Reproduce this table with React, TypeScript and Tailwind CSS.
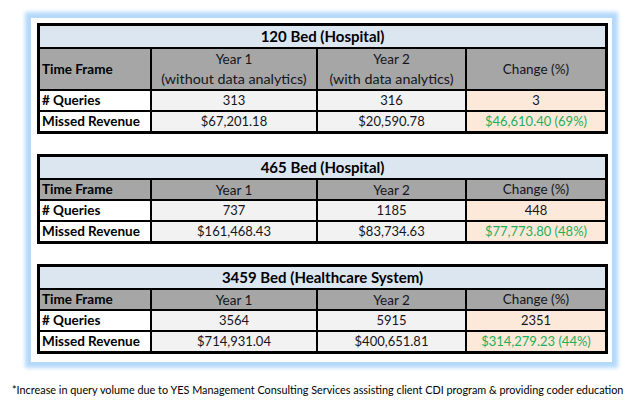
import React from "react";

type T = {
  title: string;
  y1: React.ReactNode;
  y2: React.ReactNode;
  tall: boolean;
  q: [string, string, string];
  r: [string, string, string];
};

const tables: T[] = [
  {
    title: "120 Bed (Hospital)",
    y1: (
      <>
        Year 1<br />
        <span className="text-[14.3px]">(without data analytics)</span>
      </>
    ),
    y2: (
      <>
        Year 2<br />
        <span className="text-[14.3px]">(with data analytics)</span>
      </>
    ),
    tall: true,
    q: ["313", "316", "3"],
    r: ["$67,201.18", "$20,590.78", "$46,610.40 (69%)"],
  },
  {
    title: "465 Bed (Hospital)",
    y1: "Year 1",
    y2: "Year 2",
    tall: false,
    q: ["737", "1185", "448"],
    r: ["$161,468.43", "$83,734.63", "$77,773.80 (48%)"],
  },
  {
    title: "3459 Bed (Healthcare System)",
    y1: "Year 1",
    y2: "Year 2",
    tall: false,
    q: ["3564", "5915", "2351"],
    r: ["$714,931.04", "$400,651.81", "$314,279.23 (44%)"],
  },
];

function Table({ t }: { t: T }) {
  const hh = t.tall ? "h-[40px]" : "h-[19px]";
  return (
    <div className="w-[571px] border-[3px] border-black bg-black grid grid-cols-[110px_164px_147px_138px] gap-[2px] text-[13px] leading-[19px] text-[#15151c]">
      <div className="col-span-4 h-[21px] bg-[#dce6f1] flex items-center justify-center font-bold text-[15px] text-black">
        {t.title}
      </div>
      <div className={`${hh} bg-[#a6a6a6] flex items-center pl-[2px] font-bold text-[13.5px] text-black`}>Time Frame</div>
      <div className={`${hh} bg-[#a6a6a6] flex flex-col items-center justify-center text-center leading-[20px] text-[13.5px]`}>{t.y1}</div>
      <div className={`${hh} bg-[#a6a6a6] flex flex-col items-center justify-center text-center leading-[20px] text-[13.5px]`}>{t.y2}</div>
      <div className={`${hh} bg-[#a6a6a6] flex items-center justify-center text-[13.5px]`}>Change (%)</div>

      <div className="h-[19px] bg-white flex items-center pl-[2px] font-bold text-[13.5px] text-black"># Queries</div>
      <div className="h-[19px] bg-[#f2f2f2] flex items-center justify-center">{t.q[0]}</div>
      <div className="h-[19px] bg-[#f2f2f2] flex items-center justify-center">{t.q[1]}</div>
      <div className="h-[19px] bg-[#fde9d9] flex items-center justify-center">{t.q[2]}</div>

      <div className="h-[19px] bg-white flex items-center pl-[2px] font-bold text-[13.5px] text-black">Missed Revenue</div>
      <div className="h-[19px] bg-[#f2f2f2] flex items-center justify-center">{t.r[0]}</div>
      <div className="h-[19px] bg-[#f2f2f2] flex items-center justify-center">{t.r[1]}</div>
      <div className="h-[19px] bg-[#fde9d9] flex items-center justify-center text-[#1fae5c]">{t.r[2]}</div>
    </div>
  );
}

export default function App() {
  return (
    <div className="w-[636px] h-[403px] bg-white font-['Lato',sans-serif] overflow-hidden">
      <div className="pt-[18px] pl-[31px]">
        <div className="w-[581px] h-[344px] bg-white shadow-[0_0_4px_6px_#b5d9fb] pl-[6px] pt-[5px] flex flex-col gap-[20px]">
          {tables.map((t, i) => (
            <Table key={i} t={t} />
          ))}
        </div>
      </div>
      <div className="mt-[20px] pl-[12px] text-[10.85px] text-black whitespace-nowrap">
        *Increase in query volume due to YES Management Consulting Services assisting client CDI program &amp; providing coder education
      </div>
    </div>
  );
}
